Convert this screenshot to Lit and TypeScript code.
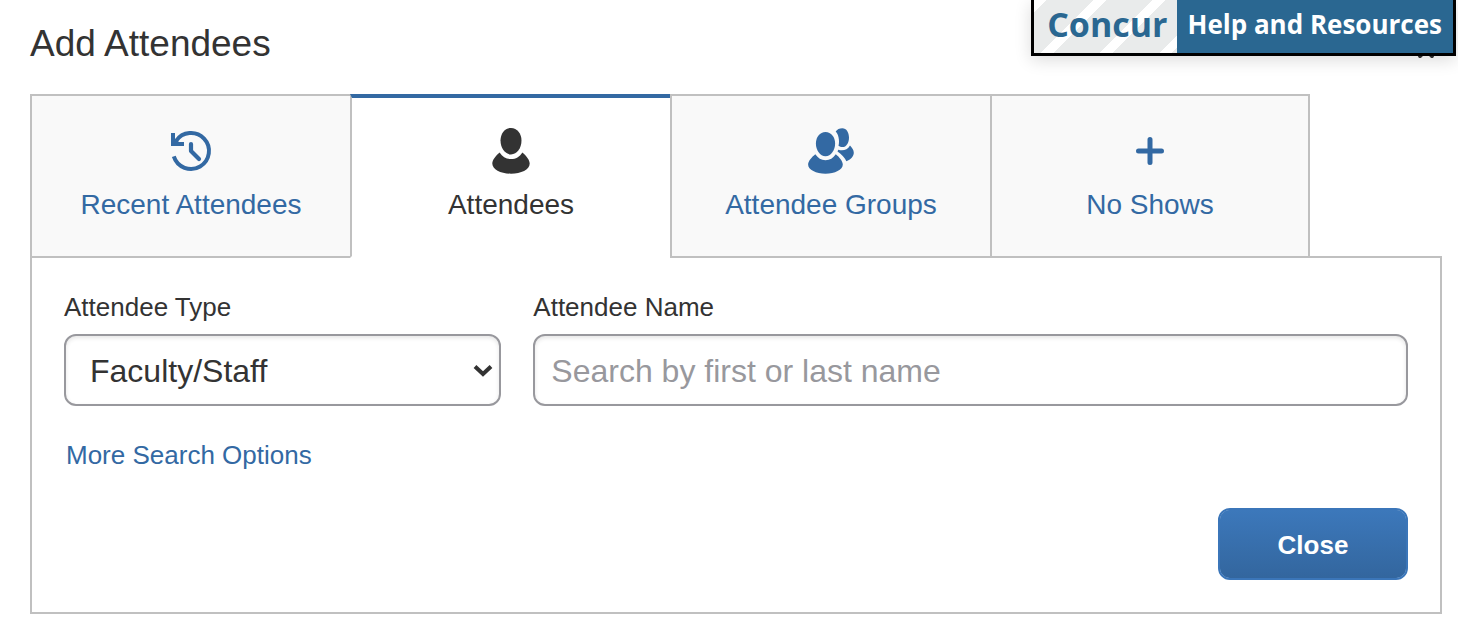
import { LitElement, html, css, svg } from "lit";
import { customElement, state } from "lit/decorators.js";
import { classMap } from "lit/directives/class-map.js";

const historyIcon = svg`
  <path d="M6.8 29.4A18 18 0 1 0 9 14" fill="none" stroke="currentColor" stroke-width="4"/>
  <path d="M4 6h4v5.5l4 3.500h5v4H4z" fill="currentColor"/>
  <path d="M24 17v7l8 8" fill="none" stroke="currentColor" stroke-width="4.2" stroke-linecap="round" stroke-linejoin="round"/>`;

const personIcon = svg`
  <path fill="currentColor" d="M24 1c6.2 0 10.5 5.6 10.5 12.6C34.500 21 30 27.500 24 27.500S13.500 21 13.500 13.600C13.500 6.600 17.800 1 24 1z"/>
  <path fill="currentColor" d="M12.600 25.400C15.600 29.800 19 32 24 32s8.400-2.200 11.400-6.600C39.200 28.500 42.700 33 42.700 36.500 42.700 42.600 34 46.700 24 46.700S5.300 42.600 5.300 36.500C5.300 33 8.800 28.500 12.600 25.400z"/>`;

const groupIcon = svg`
  <path fill="currentColor" d="M18.500 5c5.700 0 9.600 5.200 9.600 11.600 0 6.700-4.100 12.700-9.600 12.700S8.900 23.300 8.900 16.600C8.900 10.200 12.800 5 18.500 5z"/>
  <path fill="currentColor" d="M8.300 27.300c2.800 3.900 5.700 5.900 10.200 5.900s7.600-2 10.300-5.900c3.600 2.900 7 7 7 10.300 0 5.400-8 9.100-17.300 9.100S1.100 43 1.100 37.600c0-3.300 3.600-7.400 7.200-10.300z"/>
  <path fill="currentColor" d="M28.700 4.500C30 2.400 32.500 1.200 35.300 1.200c4.200 0 6.700 4.300 6.700 9.200 0 5.300-2.700 9.700-6.500 9.700-1.500 0-2.900-.4-4-1.300.7-2.700.7-5.800 0-8.600-.5-2.300-1.400-4.200-2.800-5.700z"/>
  <path fill="currentColor" d="M43 18.400c2.100 2.100 3.800 4.700 3.800 7.300 0 3.600-3 6.600-7.400 8.600-1.400-3.400-4.700-7-8.900-9.900.3-.6.6-1.100.8-1.700 5 1.500 9 .1 11.700-4.300z"/>`;

const plusIcon = svg`
  <path d="M24 12.500v23M12.500 24h23" stroke="currentColor" stroke-width="5" stroke-linecap="round"/>`;

const tabs = [
  { id: "recent", label: "Recent Attendees", icon: historyIcon },
  { id: "attendees", label: "Attendees", icon: personIcon },
  { id: "groups", label: "Attendee Groups", icon: groupIcon },
  { id: "noshows", label: "No Shows", icon: plusIcon },
];

@customElement("app-root")
export class AppRoot extends LitElement {
  @state() private selected = "attendees";

  static styles = css`
    :host {
      display: block;
      position: relative;
      padding: 0 16px 22px 30px;
      background: #fff;
      color: #333;
      font-family: "Liberation Sans", Arial, Helvetica, sans-serif;
    }
    * {
      box-sizing: border-box;
    }
    .header {
      display: flex;
      align-items: flex-end;
      justify-content: space-between;
      padding: 22px 0 28px;
    }
    .title {
      margin: 0;
      font-size: 37px;
      line-height: 44px;
      font-weight: 400;
    }
    .dismiss {
      display: flex;
      padding: 0 4px 4px;
      border: 0;
      background: none;
      color: #333;
    }
    .banner {
      position: absolute;
      top: 0;
      right: 2px;
      display: flex;
      height: 56px;
      border: 3px solid #000;
      border-top: 0;
      box-shadow: 0 4px 16px rgba(0, 0, 0, 0.14);
      font-family: "Open Sans", "Noto Sans", sans-serif;
      font-weight: 700;
      line-height: 48px;
      text-decoration: none;
      white-space: nowrap;
    }
    .brand {
      padding: 0 9px 0 13px;
      background: repeating-linear-gradient(135deg, #fff 0 9px, #e9ebeb 9px 42px);
      color: #2a6791;
      font-size: 34px;
    }
    .help {
      padding: 0 11px;
      background: #2a6791;
      color: #fff;
      font-size: 26px;
    }
    .tabs {
      position: relative;
      display: flex;
    }
    .tab {
      display: flex;
      flex: 0 1 320px;
      flex-direction: column;
      align-items: center;
      gap: 14px;
      padding: 31px 0 35px;
      border: 2px solid #c0c0c0;
      border-right-width: 0;
      border-radius: 0;
      background: #f9f9f9;
      color: #3369a3;
      font: inherit;
      font-size: 28px;
      line-height: 32px;
      cursor: pointer;
    }
    .tab:last-child {
      border-right-width: 2px;
    }
    .tab.active {
      padding-top: 29px;
      border-top: 4px solid #3369a3;
      border-bottom-color: #fff;
      background: #fff;
      color: #333;
    }
    .icon {
      display: block;
      width: 48px;
      height: 48px;
    }
    .panel {
      margin-top: -2px;
      padding: 32px;
      border: 2px solid #c0c0c0;
    }
    .fields {
      display: grid;
      grid-template-columns: 1fr 2fr;
      gap: 32px;
    }
    .field {
      display: flex;
      flex-direction: column;
      gap: 10px;
      min-width: 0;
    }
    .label {
      font-size: 26px;
      line-height: 34px;
    }
    .control {
      width: 100%;
      height: 72px;
      padding: 2px 16px 0;
      border: 2px solid #98989d;
      border-radius: 12px;
      background: #fff;
      box-shadow: inset 0 2px 4px rgba(0, 0, 0, 0.1);
      color: #333;
      font: inherit;
      font-size: 32px;
    }
    .text::placeholder {
      color: #98989d;
      opacity: 1;
    }
    .picker {
      display: grid;
      align-items: center;
    }
    .picker > * {
      grid-area: 1 / 1;
    }
    .select {
      padding: 2px 40px 0 24px;
      appearance: none;
    }
    .chevron {
      justify-self: end;
      margin-right: 8px;
      pointer-events: none;
    }
    .more {
      display: inline-block;
      margin-top: 32px;
      padding-left: 2px;
      color: #3369a3;
      font-size: 26px;
      line-height: 34px;
      text-decoration: none;
    }
    .actions {
      display: flex;
      justify-content: flex-end;
      margin-top: 36px;
    }
    .close {
      min-width: 190px;
      height: 72px;
      padding: 2px 16px 0;
      border: 2px solid #3b76b9;
      border-radius: 12px;
      background: linear-gradient(#3c78bb, #33669e) padding-box;
      background-color: #3b76b9;
      color: #fff;
      font: inherit;
      font-size: 26px;
      font-weight: 700;
    }
  `;

  render() {
    return html`
      <header class="header">
        <h1 class="title">Add Attendees</h1>
        <button class="dismiss" aria-label="Dismiss">
          <svg width="24" height="24" viewBox="0 0 24 24">
            <path d="M6 6l12 12M18 6L6 18" stroke="currentColor" stroke-width="4" stroke-linecap="round" />
          </svg>
        </button>
      </header>
      <a class="banner" href="#help">
        <span class="brand">Concur</span>
        <span class="help">Help and Resources</span>
      </a>
      <div class="tabs" role="tablist">
        ${tabs.map(
          (tab) => html`
            <button
              class=${classMap({ tab: true, active: tab.id === this.selected })}
              role="tab"
              aria-selected=${tab.id === this.selected ? "true" : "false"}
              @click=${() => (this.selected = tab.id)}
            >
              <svg class="icon" viewBox="0 0 48 48" aria-hidden="true">${tab.icon}</svg>
              <span>${tab.label}</span>
            </button>
          `
        )}
      </div>
      <section class="panel" role="tabpanel">
        <div class="fields">
          <div class="field">
            <label class="label" for="type">Attendee Type</label>
            <div class="picker">
              <select class="control select" id="type">
                <option>Faculty/Staff</option>
              </select>
              <svg class="chevron" width="20" height="14" viewBox="0 0 20 14" aria-hidden="true">
                <path d="M2 3.500l8 7.500 8-7.500" fill="none" stroke="#333" stroke-width="4" />
              </svg>
            </div>
          </div>
          <div class="field">
            <label class="label" for="name">Attendee Name</label>
            <input class="control text" id="name" type="text" placeholder="Search by first or last name" />
          </div>
        </div>
        <a class="more" href="#options">More Search Options</a>
        <div class="actions">
          <button class="close">Close</button>
        </div>
      </section>
    `;
  }
}
